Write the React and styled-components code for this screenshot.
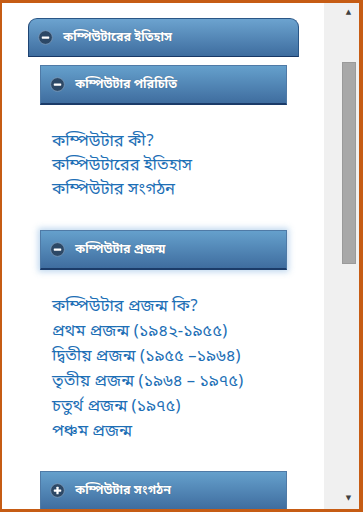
import styled, { createGlobalStyle } from "styled-components";

const GlobalStyle = createGlobalStyle`
  html, body {
    margin: 0;
    padding: 0;
    background: #ffffff;
  }
  * {
    box-sizing: border-box;
  }
`;

const bangla = `"Noto Sans Bengali", "Noto Serif Bengali", "Lohit Bengali", Vrinda, "Noto Sans", sans-serif`;

const history = ["কম্পিউটার কী?", "কম্পিউটারের ইতিহাস", "কম্পিউটার সংগঠন"];

const generations = [
  "কম্পিউটার প্রজন্ম কি?",
  "প্রথম প্রজন্ম (১৯৪২-১৯৫৫)",
  "দ্বিতীয় প্রজন্ম (১৯৫৫ –১৯৬৪)",
  "তৃতীয় প্রজন্ম (১৯৬৪ – ১৯৭৫)",
  "চতুর্থ প্রজন্ম (১৯৭৫)",
  "পঞ্চম প্রজন্ম",
];

const Toggle = ({ open }) => (
  <ToggleIcon viewBox="0 0 16 16">
    <circle cx="8" cy="8" r="7.3" fill="#2c4866" stroke="#7f9bb8" strokeWidth="0.8" />
    <rect x="4" y="6.8" width="8" height="2.4" rx="0.6" fill="#ffffff" />
    {!open && <rect x="6.8" y="4" width="2.4" height="8" rx="0.6" fill="#ffffff" />}
  </ToggleIcon>
);

const App = () => {
  return (
    <>
      <GlobalStyle />
      <Frame>
        <Content>
          <MainHeader>
            <Toggle open />
            <span>কম্পিউটারের ইতিহাস</span>
          </MainHeader>
          <Section>
            <SubHeader>
              <Toggle open />
              <span>কম্পিউটার পরিচিতি</span>
            </SubHeader>
            <LinkList $top={25} $bottom={28} $line={24}>
              {history.map((t) => (
                <LinkItem key={t} href="#">{t}</LinkItem>
              ))}
            </LinkList>
            <SubHeader $glow>
              <Toggle open />
              <span>কম্পিউটার প্রজন্ম</span>
            </SubHeader>
            <LinkList $top={25} $bottom={26} $line={25}>
              {generations.map((t) => (
                <LinkItem key={t} href="#">{t}</LinkItem>
              ))}
            </LinkList>
            <SubHeader>
              <Toggle />
              <span>কম্পিউটার সংগঠন</span>
            </SubHeader>
          </Section>
        </Content>
        <ScrollTrack>
          <Arrow>▲</Arrow>
          <Thumb />
          <Spacer />
          <Arrow>▼</Arrow>
        </ScrollTrack>
      </Frame>
    </>
  );
};

export default App;

const Frame = styled.div`
  width: 363px;
  height: 512px;
  border-style: solid;
  border-color: #c65c14;
  border-width: 3px 4px 3px 2px;
  display: flex;
  overflow: hidden;
  background: #ffffff;
`;

const Content = styled.div`
  flex: 1;
  padding: 15px 0 0 26px;
  overflow: hidden;
`;

const MainHeader = styled.div`
  width: 271px;
  height: 39px;
  display: flex;
  align-items: center;
  gap: 10px;
  padding-left: 9px;
  border: 1px solid #2a5686;
  border-bottom-color: #173866;
  border-left-color: #1e4473;
  border-radius: 9px 9px 0 0;
  background: linear-gradient(#6ca3cf, #3e6d9f);
  color: #ffffff;
  font-family: ${bangla};
  font-size: 12.5px;
  font-weight: 700;
  text-shadow: 0 0 1px rgba(0, 0, 0, 0.3);
`;

const Section = styled.div`
  padding: 8px 0 0 12px;
`;

const SubHeader = styled.div`
  width: 247px;
  height: 40px;
  display: flex;
  align-items: center;
  gap: 10px;
  padding-left: 9px;
  border: 1px solid #4f7aa6;
  border-bottom: 2px solid #1b3b68;
  background: linear-gradient(#65a0cc, #3f6d9f);
  color: #ffffff;
  font-family: ${bangla};
  font-size: 12.5px;
  font-weight: 700;
  text-shadow: 0 0 1px rgba(0, 0, 0, 0.3);
  box-shadow: ${(p) => (p.$glow ? "0 0 6px 2px rgba(120, 170, 220, 0.45)" : "none")};
`;

const ToggleIcon = styled.svg`
  width: 15px;
  height: 15px;
  flex: none;
`;

const LinkList = styled.div`
  display: flex;
  flex-direction: column;
  padding: ${(p) => p.$top}px 0 ${(p) => p.$bottom}px 12px;
  line-height: ${(p) => p.$line}px;
`;

const LinkItem = styled.a`
  color: #1d6fb6;
  text-decoration: none;
  font-family: ${bangla};
  font-size: 16.5px;
`;

const ScrollTrack = styled.div`
  width: 35px;
  flex: none;
  background: #f0f0f0;
  display: flex;
  flex-direction: column;
  align-items: center;
  padding: 4px 0 6px 14px;
`;

const Arrow = styled.div`
  font-family: "DejaVu Sans", sans-serif;
  font-size: 7px;
  color: #404040;
  line-height: 10px;
  height: 10px;
`;

const Thumb = styled.div`
  width: 14px;
  height: 202px;
  margin-top: 45px;
  background: #a8a8a8;
  border: 1px solid #9a9a9a;
`;

const Spacer = styled.div`
  flex: 1;
`;
